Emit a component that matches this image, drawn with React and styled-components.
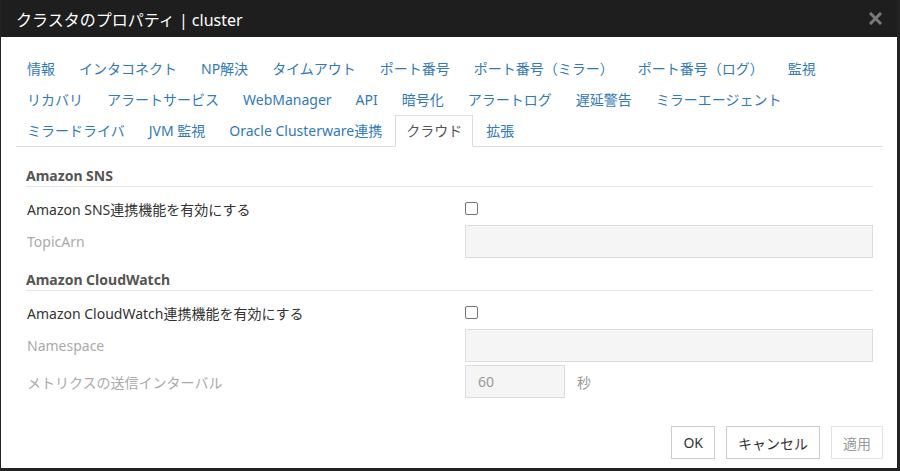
import React from "react";
import styled, { createGlobalStyle } from "styled-components";

const tabs = [
  "情報",
  "インタコネクト",
  "NP解決",
  "タイムアウト",
  "ポート番号",
  "ポート番号（ミラー）",
  "ポート番号（ログ）",
  "監視",
  "リカバリ",
  "アラートサービス",
  "WebManager",
  "API",
  "暗号化",
  "アラートログ",
  "遅延警告",
  "ミラーエージェント",
  "ミラードライバ",
  "JVM 監視",
  "Oracle Clusterware連携",
  "クラウド",
  "拡張",
];

const GlobalStyle = createGlobalStyle`
  html, body {
    margin: 0;
    padding: 0;
    background: #232323;
  }
  body {
    font-family: "Noto Sans", "Noto Sans CJK JP", sans-serif;
    font-size: 14px;
    color: #333;
  }
  * {
    box-sizing: border-box;
  }
`;

const Dialog = styled.div`
  margin: 0 3px 3px 1px;
  height: 468px;
  background: #fff;
  display: flex;
  flex-direction: column;
`;

const TitleBar = styled.div`
  height: 37px;
  flex-shrink: 0;
  background: #1e1e1e;
  color: #fff;
  padding: 0 15px;
  display: flex;
  align-items: center;
  justify-content: space-between;
  font-size: 16px;
`;

const CloseButton = styled.button`
  border: 0;
  background: none;
  padding: 0;
  width: 13px;
  height: 13px;
  display: flex;
  cursor: pointer;
`;

const Body = styled.div`
  padding: 16px 14px 0 15px;
`;

const TabList = styled.ul`
  list-style: none;
  margin: 0;
  padding: 0;
  display: flex;
  flex-wrap: wrap;
  border-bottom: 1px solid #ddd;
`;

const Tab = styled.li`
  height: 32px;
  line-height: 30px;
  margin: 0 2px -1px 0;
  padding: 0 10px;
  border: 1px solid ${(p) => (p.$active ? "#ddd" : "transparent")};
  border-bottom-color: transparent;
  background: ${(p) => (p.$active ? "#fff" : "transparent")};
  color: ${(p) => (p.$active ? "#555" : "#3479b7")};
  white-space: nowrap;
  cursor: pointer;
`;

const Panel = styled.div`
  padding: 19px 10px 0 11px;
`;

const SectionTitle = styled.div`
  font-weight: bold;
  color: #555;
  line-height: 20px;
  border-bottom: 1px solid #e5e5e5;
  margin: ${(p) => (p.$first ? "0" : "12px")} 0 5px -1px;
`;

const FormRow = styled.div`
  display: grid;
  grid-template-columns: 438px 1fr;
  align-items: center;
  height: 33px;
  margin-top: ${(p) => p.$gap || 0}px;
`;

const Label = styled.label`
  color: ${(p) => (p.$disabled ? "#aaa" : "#333")};
`;

const Checkbox = styled.span`
  display: block;
  width: 13px;
  height: 13px;
  border: 1px solid #767676;
  border-radius: 2px;
  background: #fff;
`;

const Field = styled.div`
  display: flex;
  align-items: center;
`;

const Input = styled.div`
  height: 33px;
  width: ${(p) => p.$width || "100%"};
  background: #f5f5f5;
  border: 1px solid #ddd;
  color: #999;
  padding: 0 12px;
  line-height: 31px;
`;

const Unit = styled.span`
  color: #999;
  margin-left: 12px;
`;

const Footer = styled.div`
  margin-top: auto;
  padding: 0 14px 9px 0;
  display: flex;
  justify-content: flex-end;
  gap: 11px;
`;

const Button = styled.button`
  height: 33px;
  padding: 0 11px;
  background: #fff;
  border: 1px solid ${(p) => (p.disabled ? "#e3e3e3" : "#ccc")};
  color: ${(p) => (p.disabled ? "#999" : "#333")};
  font: inherit;
  font-size: 14px;
  cursor: ${(p) => (p.disabled ? "default" : "pointer")};
`;

const App = () => {
  return (
    <>
      <GlobalStyle />
      <Dialog>
        <TitleBar>
          <span>クラスタのプロパティ | cluster</span>
          <CloseButton aria-label="close">
            <svg width="13" height="13" viewBox="0 0 13 13">
              <path
                d="M2 2 L11 11 M11 2 L2 11"
                stroke="#7a7a7a"
                strokeWidth="3"
                strokeLinecap="square"
              />
            </svg>
          </CloseButton>
        </TitleBar>
        <Body>
          <TabList>
            {tabs.map((t) => (
              <Tab key={t} $active={t === "クラウド"}>
                {t}
              </Tab>
            ))}
          </TabList>
          <Panel>
            <SectionTitle $first>Amazon SNS</SectionTitle>
            <FormRow>
              <Label>Amazon SNS連携機能を有効にする</Label>
              <Checkbox />
            </FormRow>
            <FormRow>
              <Label $disabled>TopicArn</Label>
              <Input />
            </FormRow>
            <SectionTitle>Amazon CloudWatch</SectionTitle>
            <FormRow>
              <Label>Amazon CloudWatch連携機能を有効にする</Label>
              <Checkbox />
            </FormRow>
            <FormRow>
              <Label $disabled>Namespace</Label>
              <Input />
            </FormRow>
            <FormRow $gap={3}>
              <Label $disabled>メトリクスの送信インターバル</Label>
              <Field>
                <Input $width="100px">60</Input>
                <Unit>秒</Unit>
              </Field>
            </FormRow>
          </Panel>
        </Body>
        <Footer>
          <Button>OK</Button>
          <Button>キャンセル</Button>
          <Button disabled>適用</Button>
        </Footer>
      </Dialog>
    </>
  );
};

export default App;
